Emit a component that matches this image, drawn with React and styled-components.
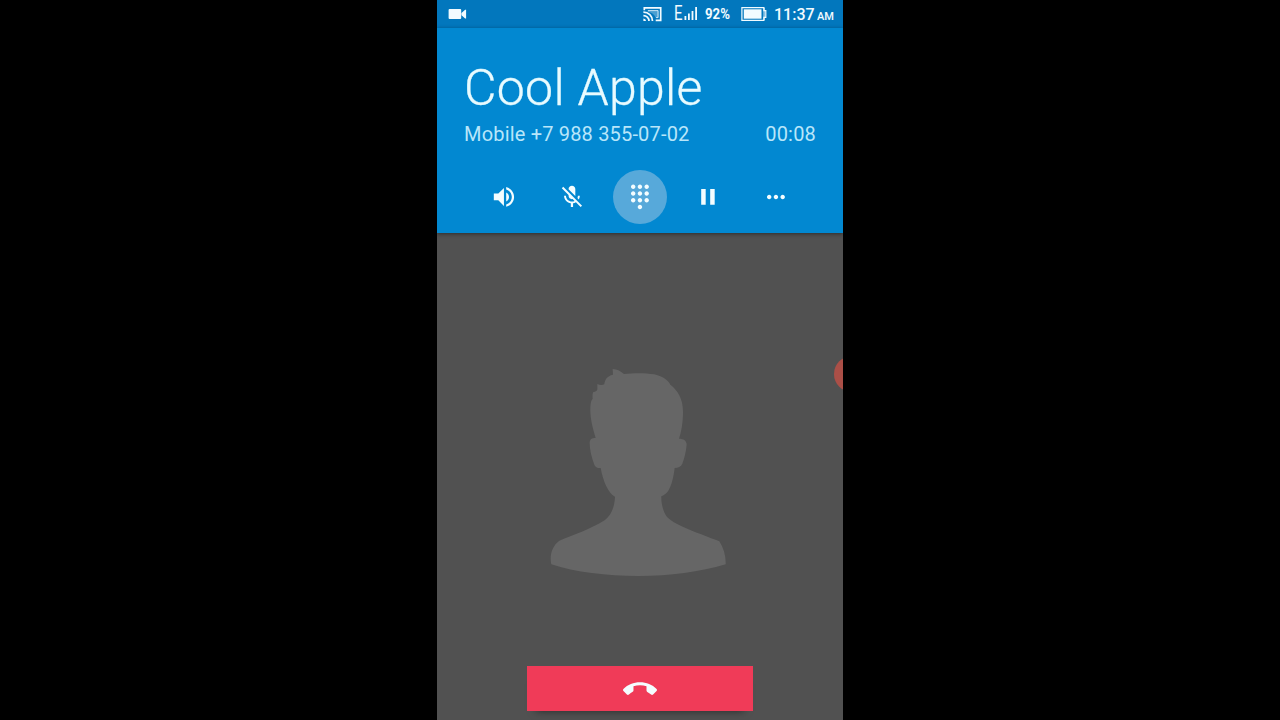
import React from "react";
import styled, { createGlobalStyle } from "styled-components";

const GlobalStyle = createGlobalStyle`
  body {
    margin: 0;
    background-color: #000;
    font-family: Roboto, "Liberation Sans", sans-serif;
  }
`;

const Container = styled.div`
  display: flex;
  justify-content: center;
  width: 100%;
  height: 720px;
  overflow: hidden;
  background-color: #000;
`;

const Phone = styled.div`
  position: relative;
  display: flex;
  flex-direction: column;
  width: 406px;
  height: 720px;
  overflow: hidden;
  background-color: #515151;
`;

const StatusBar = styled.div`
  display: flex;
  justify-content: space-between;
  height: 28px;
  padding: 0 9px 0 11px;
  background-color: #0277bd;
  color: #f2fbff;
`;

const StatusGroup = styled.div`
  display: flex;
  height: 28px;
`;

const StatusIcon = styled.svg`
  display: block;
  flex: none;
  margin-left: ${(props) => props.$gap || 0}px;
  fill: #f2fbff;
`;

const StatusText = styled.span`
  width: ${(props) => props.$width}px;
  margin-left: ${(props) => props.$gap}px;
  font-size: ${(props) => props.$size}px;
  font-weight: ${(props) => props.$weight || 500};
  line-height: ${(props) => props.$line || 30}px;
  white-space: nowrap;
  transform: scaleX(${(props) => props.$squeeze || 1});
  transform-origin: left;
`;

const Header = styled.div`
  position: relative;
  height: 205px;
  background-color: #0288d1;
  box-shadow: 0 1px 4px rgba(0, 0, 0, 0.45);
`;

const Name = styled.div`
  padding: 30px 27px 0;
  font-size: 50px;
  font-weight: 300;
  line-height: 60px;
  letter-spacing: 0.3px;
  color: #e8fbff;
  -webkit-text-stroke: 0.3px #e8fbff;
`;

const Details = styled.div`
  display: flex;
  justify-content: space-between;
  padding: 3px 27px 0;
  font-size: 20px;
  line-height: 26px;
  letter-spacing: 0.18px;
  color: #b8e6fa;
`;

const Actions = styled.div`
  display: flex;
  justify-content: space-between;
  margin-top: 23px;
  padding: 0 40px;
`;

const Action = styled.div`
  display: flex;
  justify-content: center;
  align-items: center;
  width: 54px;
  height: 54px;
  border-radius: 50%;
  background-color: ${(props) => (props.$active ? "#57a9da" : "transparent")};
`;

const Icon = styled.svg`
  display: block;
  width: ${(props) => props.$size || 27}px;
  height: ${(props) => props.$size || 27}px;
  fill: #f4fdff;
`;

const Photo = styled.div`
  display: flex;
  justify-content: center;
  padding-top: 127px;
`;

const Footer = styled.div`
  display: flex;
  justify-content: center;
  margin-top: auto;
  padding-bottom: 9px;
`;

const EndButton = styled.div`
  display: flex;
  justify-content: center;
  align-items: center;
  width: 226px;
  height: 45px;
  background-color: #f03b58;
  box-shadow: 0 9px 8px -9px rgba(0, 0, 0, 0.5);
`;

const Bubble = styled.div`
  position: absolute;
  top: 356px;
  left: 397px;
  width: 36px;
  height: 36px;
  border-radius: 50%;
  background-color: #ab4f47;
`;

const actions = [
  {
    name: "speaker",
    path: "M3 9v6h4l5 5V4L7 9H3zm13.5 3c0-1.77-1.02-3.29-2.5-4.03v8.05c1.48-.73 2.5-2.25 2.5-4.02zM14 3.23v2.06c2.89.86 5 3.54 5 6.71s-2.11 5.85-5 6.71v2.06c4.01-.91 7-4.49 7-8.77s-2.99-7.86-7-8.77z",
  },
  {
    name: "mute",
    path: "M19 11h-1.7c0 .74-.16 1.43-.43 2.05l1.23 1.23c.56-.98.9-2.09.9-3.28zm-4.02.17c0-.06.02-.11.02-.17V5c0-1.66-1.34-3-3-3S9 3.34 9 5v.18l5.98 5.99zM4.27 3L3 4.27l6.01 6.01V11c0 1.66 1.33 3 2.99 3 .22 0 .44-.03.65-.08l1.66 1.66c-.71.33-1.5.52-2.31.52-2.76 0-5.3-2.1-5.3-5.1H5c0 3.41 2.72 6.23 6 6.72V21h2v-3.28c.91-.13 1.77-.45 2.54-.9L19.73 21 21 19.73 4.27 3z",
  },
  {
    name: "dialpad",
    active: true,
    path: "M12 19c-1.1 0-2 .9-2 2s.9 2 2 2 2-.9 2-2-.9-2-2-2zM6 1c-1.1 0-2 .9-2 2s.9 2 2 2 2-.9 2-2-.9-2-2-2zm0 6c-1.1 0-2 .9-2 2s.9 2 2 2 2-.9 2-2-.9-2-2-2zm0 6c-1.1 0-2 .9-2 2s.9 2 2 2 2-.9 2-2-.9-2-2-2zm12-8c1.1 0 2-.9 2-2s-.9-2-2-2-2 .9-2 2 .9 2 2 2zm-6 8c-1.1 0-2 .9-2 2s.9 2 2 2 2-.9 2-2-.9-2-2-2zm6 0c-1.1 0-2 .9-2 2s.9 2 2 2 2-.9 2-2-.9-2-2-2zm0-6c-1.1 0-2 .9-2 2s.9 2 2 2 2-.9 2-2-.9-2-2-2zm-6 0c-1.1 0-2 .9-2 2s.9 2 2 2 2-.9 2-2-.9-2-2-2zm0-6c-1.1 0-2 .9-2 2s.9 2 2 2 2-.9 2-2-.9-2-2-2z",
  },
  { name: "hold", path: "M6 19h4V5H6v14zm8-14v14h4V5h-4z" },
  {
    name: "more",
    path: "M6 10c-1.1 0-2 .9-2 2s.9 2 2 2 2-.9 2-2-.9-2-2-2zm12 0c-1.1 0-2 .9-2 2s.9 2 2 2 2-.9 2-2-.9-2-2-2zm-6 0c-1.1 0-2 .9-2 2s.9 2 2 2 2-.9 2-2-.9-2-2-2z",
  },
];

const App = () => {
  return (
    <Container>
      <GlobalStyle />
      <Phone>
        <StatusBar>
          <StatusIcon width="20" height="28" viewBox="0 0 20 28">
            <path d="M1.6 9h10.6q1 0 1 1v8q0 1-1 1H1.6q-1 0-1-1v-8q0-1 1-1zM13.5 13l3.6-3.2h1v8.6h-1l-3.6-3.2z" />
          </StatusIcon>
          <StatusGroup>
            <StatusIcon width="20" height="28" viewBox="0 0 20 28">
              <path d="M4.5 10.2h11.2v7.6h-3q-1.8-5-8.2-6z" opacity="0.3" />
              <g fill="none" stroke="#f2fbff" strokeWidth="1.7">
                <path d="M1.3 10.2V7.8h16.4v12.6h-5" />
                <path d="M.4 12.1a9 9 0 0 1 9.1 9M.4 15.6a5.5 5.5 0 0 1 5.6 5.5" />
                <path d="M5 10.6h10v7h-2" strokeWidth="1" opacity="0.75" />
              </g>
              <path d="M.4 18.4q2.5.2 2.7 2.7H.4z" />
            </StatusIcon>
            <StatusText $width={9} $gap={11} $size={20} $weight={400} $line={27} $squeeze={0.75}>
              E
            </StatusText>
            <StatusIcon $gap={1} width="14" height="28" viewBox="0 0 14 28">
              <path d="M.5 16h1.8v4H.5zM4 13.5h1.8V20H4zM7.6 11h1.8v9H7.6zM11.2 7H13v13h-1.8z" />
            </StatusIcon>
            <StatusText $width={26} $gap={7} $size={15} $weight={700} $line={29} $squeeze={0.88}>
              92%
            </StatusText>
            <StatusIcon $gap={10} width="26" height="28" viewBox="0 0 26 28">
              <path
                d="M.9 7.6h22v3h1.9v6.8h-1.9v3H.9z"
                fill="none"
                stroke="#f2fbff"
                strokeWidth="1.2"
              />
              <path d="M2.8 9.3h17.7v9.4H2.8z" />
              <path d="M22.4 8h1.4v12h-1.4z" opacity="0.7" />
            </StatusIcon>
            <StatusText $width={39} $gap={7} $size={16}>
              11:37
            </StatusText>
            <StatusText $width={17} $gap={4} $size={11.5} $line={33} $squeeze={0.96}>
              AM
            </StatusText>
          </StatusGroup>
        </StatusBar>
        <Header>
          <Name>Cool Apple</Name>
          <Details>
            <span>Mobile +7 988 355-07-02</span>
            <span>00:08</span>
          </Details>
          <Actions>
            {actions.map((action) => (
              <Action key={action.name} $active={action.active}>
                <Icon viewBox="0.5 0.5 24 24">
                  <path d={action.path} />
                </Icon>
              </Action>
            ))}
          </Actions>
        </Header>
        <Photo>
          <svg width="200" height="225" viewBox="0 0 600 675">
            <path
              fill="#666"
              d="M218 27C232 28 243 34 252 42C280 39 315 38 342 43C366 48 384 60 391 74C414 92 429 116 429 156C429 188 424 216 417 236C431 236 440 242 440 254C438 276 433 295 427 311C423 320 414 324 404 324C401 350 395 376 385 392C379 401 371 405 364 409C363 432 370 456 381 471C411 500 480 520 538 544C551 564 558 588 557 613C480 636 390 648 296 648C200 648 105 637 34 613C28 586 36 558 58 542C105 523 150 508 194 481C214 466 224 439 225 410C204 399 189 362 182 324C173 325 166 321 163 314C155 293 149 270 149 249C149 238 155 234 167 234C157 200 150 172 151 142C152 129 153 121 158 116C157 107 158 100 160 96C167 96 172 92 172 88L172 72C180 76 188 75 193 73C194 59 201 48 219 44Z"
            />
          </svg>
        </Photo>
        <Footer>
          <EndButton>
            <Icon $size={34} viewBox="0 -0.3 24 24">
              <path d="M12 9c-1.6 0-3.15.25-4.6.72v3.1c0 .39-.23.74-.56.9-.98.49-1.87 1.12-2.66 1.85-.18.18-.43.28-.7.28-.28 0-.53-.11-.71-.29L.29 13.08c-.18-.17-.29-.42-.29-.7 0-.28.11-.53.29-.71C3.34 8.78 7.46 7 12 7s8.66 1.78 11.71 4.67c.18.18.29.43.29.71 0 .28-.11.53-.29.71l-2.48 2.48c-.18.18-.43.29-.71.29-.27 0-.52-.11-.7-.28-.79-.74-1.69-1.36-2.67-1.85-.33-.16-.56-.5-.56-.9v-3.1C15.15 9.25 13.6 9 12 9z" />
            </Icon>
          </EndButton>
        </Footer>
        <Bubble />
      </Phone>
    </Container>
  );
};

export default App;
